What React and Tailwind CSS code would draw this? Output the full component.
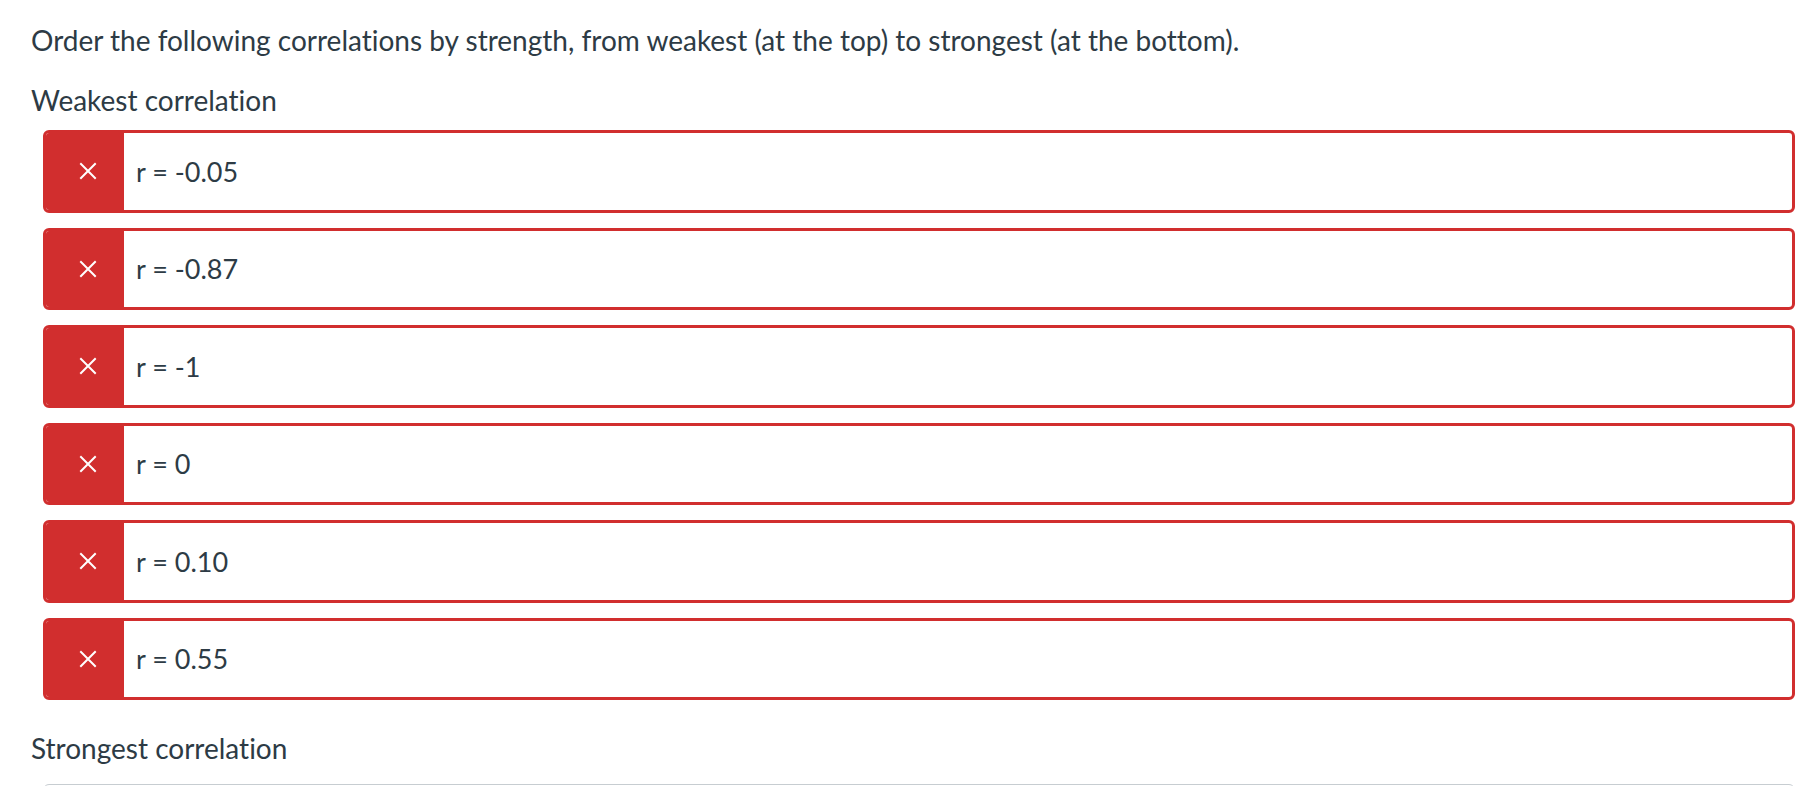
const ITEMS = ['r = -0.05', 'r = -0.87', 'r = -1', 'r = 0', 'r = 0.10', 'r = 0.55']

function CrossIcon() {
  return (
    <svg width="18" height="18" viewBox="0 0 18 18" fill="none" aria-hidden="true">
      <path d="M2 2L16 16M16 2L2 16" stroke="white" strokeWidth="2" strokeLinecap="square" />
    </svg>
  )
}

function OrderItem({ label }) {
  return (
    <li className="flex h-[82.5px] rounded-[6px] border-[3px] border-[#d12e2e] bg-white overflow-hidden">
      <div className="flex w-[78px] shrink-0 items-center justify-center bg-[#d12e2e] pl-[6px]">
        <CrossIcon />
      </div>
      <div className="flex items-center pl-[12px] pt-[1px] text-[27px]">{label}</div>
    </li>
  )
}

export default function App() {
  return (
    <div
      className="h-screen bg-white pl-[31px] pr-[5px] pt-[22px] text-[#2d3b45] overflow-hidden [font-variant-ligatures:none]"
      style={{ fontFamily: 'Lato, "Noto Sans", sans-serif' }}
    >
      <p className="text-[28px] leading-[36px]">
        Order the following correlations by strength, from weakest (at the top) to strongest (at the bottom).
      </p>
      <p className="mt-[24px] text-[28px] leading-[36px]">Weakest correlation</p>
      <ul className="mt-[12px] ml-[12px] flex flex-col gap-[15px]">
        {ITEMS.map((item) => (
          <OrderItem key={item} label={item} />
        ))}
      </ul>
      <p className="mt-[29.5px] text-[28px] leading-[36px]">Strongest correlation</p>
      <div className="mt-[18px] ml-[12px] h-[60px] rounded-[6px] border border-[#c7cdd1]" />
    </div>
  )
}
